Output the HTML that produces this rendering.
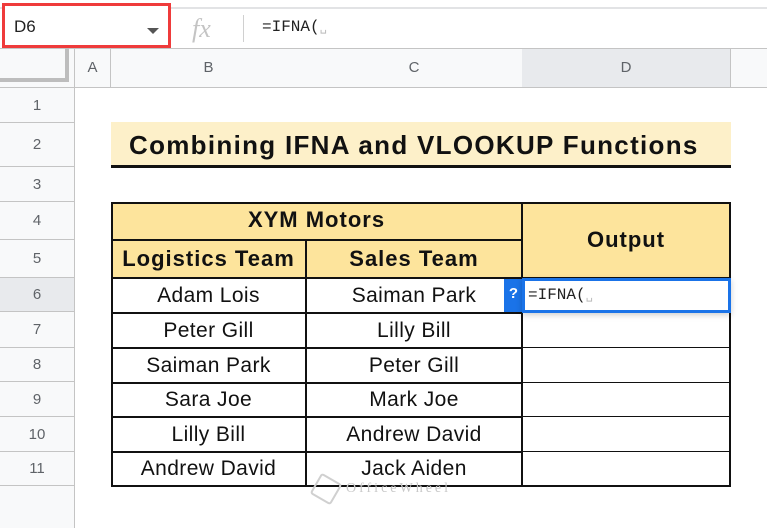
<!DOCTYPE html>
<html><head><style>
*{margin:0;padding:0;box-sizing:border-box}
body{width:767px;height:528px;position:relative;background:#fff;font-family:"Liberation Sans",Arial,sans-serif;overflow:hidden}
.a{position:absolute}
.hd{background:#f8f9fa;color:#5f6368;font-size:15px;text-align:center}
.c{position:absolute;text-align:center;font-size:21px;color:#111;letter-spacing:0.4px;white-space:nowrap}
.b{font-weight:bold;font-size:22px;letter-spacing:1px}
</style></head><body>
<!-- top bar -->
<div class="a" style="left:0;top:7px;width:767px;height:2px;background:#e2e3e5"></div>
<div class="a" style="left:2px;top:3px;width:169px;height:45px;border:3px solid #ef3b3b;background:#fff"></div>
<div class="a" style="left:14px;top:17px;font-size:17px;color:#222">D6</div>
<div class="a" style="left:147px;top:28px;width:0;height:0;border-left:6px solid transparent;border-right:6px solid transparent;border-top:6px solid #555"></div>
<div class="a" style="left:192px;top:14px;font-size:26px;color:#c4c4c4;font-style:italic;font-family:'Liberation Serif',serif">fx</div>
<div class="a" style="left:243px;top:15px;width:1px;height:27px;background:#d0d0d0"></div>
<div class="a" style="left:262px;top:18px;font-size:16px;color:#222;font-family:'Liberation Mono',monospace">=IFNA(<span style="color:#bbb;font-size:12px">␣</span></div>
<!-- column headers -->
<div class="a hd" style="left:0;top:48px;width:767px;height:40px;border-top:1px solid #c4c4c4;border-bottom:1px solid #c4c4c4"></div>
<div class="a" style="left:0;top:48px;width:69px;height:34px;border-right:4px solid #bdbdbd;border-bottom:4px solid #bdbdbd"></div>
<div class="a hd" style="left:74px;top:49px;width:37px;height:38px;line-height:38px;border-left:1px solid #c4c4c4;border-right:1px solid #c4c4c4">A</div>
<div class="a hd" style="left:111px;top:49px;width:196px;height:38px;line-height:38px;border-right:1px solid #c4c4c4">B</div>
<div class="a hd" style="left:306px;top:49px;width:217px;height:38px;line-height:38px;border-right:1px solid #c4c4c4">C</div>
<div class="a hd" style="left:522px;top:49px;width:209px;height:38px;line-height:38px;border-right:1px solid #c4c4c4;background:#e8eaed">D</div>
<!-- row headers -->
<div class="a" style="left:0;top:88px;width:75px;height:440px;background:#f8f9fa;border-right:1px solid #c4c4c4"></div>
<div class="a" style="left:74px;top:88px;width:1px;height:440px;background:#c4c4c4"></div>
<div class="a hd" style="left:0;top:88px;width:74px;height:35px;line-height:35px;border-bottom:1px solid #c4c4c4">1</div>
<div class="a hd" style="left:0;top:123px;width:74px;height:44px;line-height:44px;border-bottom:1px solid #c4c4c4">2</div>
<div class="a hd" style="left:0;top:167px;width:74px;height:35px;line-height:35px;border-bottom:1px solid #c4c4c4">3</div>
<div class="a hd" style="left:0;top:202px;width:74px;height:38px;line-height:38px;border-bottom:1px solid #c4c4c4">4</div>
<div class="a hd" style="left:0;top:240px;width:74px;height:38px;line-height:38px;border-bottom:1px solid #c4c4c4">5</div>
<div class="a hd" style="left:0;top:278px;width:74px;height:34px;line-height:34px;border-bottom:1px solid #c4c4c4;background:#e8eaed">6</div>
<div class="a hd" style="left:0;top:312px;width:74px;height:36px;line-height:36px;border-bottom:1px solid #c4c4c4">7</div>
<div class="a hd" style="left:0;top:348px;width:74px;height:34px;line-height:34px;border-bottom:1px solid #c4c4c4">8</div>
<div class="a hd" style="left:0;top:382px;width:74px;height:35px;line-height:35px;border-bottom:1px solid #c4c4c4">9</div>
<div class="a hd" style="left:0;top:417px;width:74px;height:35px;line-height:35px;border-bottom:1px solid #c4c4c4">10</div>
<div class="a hd" style="left:0;top:452px;width:74px;height:34px;line-height:34px;border-bottom:1px solid #c4c4c4">11</div>
<!-- title -->
<div class="a" style="left:111px;top:122px;width:620px;height:46px;background:#fdf0c9;border-bottom:3px solid #111"></div>
<div class="a" style="left:129px;top:130px;font-size:26px;font-weight:bold;color:#111;white-space:nowrap;letter-spacing:1.3px">Combining IFNA and VLOOKUP Functions</div>
<!-- table header -->
<div class="a" style="left:111px;top:202px;width:620px;height:76px;background:#fde49c"></div>
<div class="a" style="left:111px;top:202px;width:620px;height:285px;border:2px solid #111"></div>
<div class="a" style="left:521px;top:202px;width:2px;height:285px;background:#111"></div>
<div class="a" style="left:305px;top:239px;width:2px;height:248px;background:#111"></div>
<div class="a" style="left:111px;top:239px;width:411px;height:2px;background:#111"></div>
<div class="a" style="left:111px;top:277px;width:620px;height:2px;background:#111"></div>
<div class="a" style="left:111px;top:312px;width:411px;height:2px;background:#111"></div>
<div class="a" style="left:111px;top:347px;width:411px;height:2px;background:#111"></div>
<div class="a" style="left:111px;top:382px;width:411px;height:2px;background:#111"></div>
<div class="a" style="left:111px;top:416px;width:411px;height:2px;background:#111"></div>
<div class="a" style="left:111px;top:451px;width:411px;height:2px;background:#111"></div>
<div class="a" style="left:522px;top:347px;width:208px;height:1px;background:#111"></div>
<div class="a" style="left:522px;top:382px;width:208px;height:1px;background:#111"></div>
<div class="a" style="left:522px;top:416px;width:208px;height:1px;background:#111"></div>
<div class="a" style="left:522px;top:451px;width:208px;height:1px;background:#111"></div>
<div class="c b" style="left:111px;top:207px;width:411px">XYM Motors</div>
<div class="c b" style="left:522px;top:227px;width:208px">Output</div>
<div class="c b" style="left:111px;top:246px;width:195px">Logistics Team</div>
<div class="c b" style="left:306px;top:246px;width:216px">Sales Team</div>
<div class="c" style="left:111px;top:284px;width:195px">Adam Lois</div>
<div class="c" style="left:306px;top:284px;width:216px">Saiman Park</div>
<div class="c" style="left:111px;top:319px;width:195px">Peter Gill</div>
<div class="c" style="left:306px;top:319px;width:216px">Lilly Bill</div>
<div class="c" style="left:111px;top:354px;width:195px">Saiman Park</div>
<div class="c" style="left:306px;top:354px;width:216px">Peter Gill</div>
<div class="c" style="left:111px;top:388px;width:195px">Sara Joe</div>
<div class="c" style="left:306px;top:388px;width:216px">Mark Joe</div>
<div class="c" style="left:111px;top:423px;width:195px">Lilly Bill</div>
<div class="c" style="left:306px;top:423px;width:216px">Andrew David</div>
<div class="c" style="left:111px;top:457px;width:195px">Andrew David</div>
<div class="c" style="left:306px;top:457px;width:216px">Jack Aiden</div>
<!-- active cell -->
<div class="a" style="left:504px;top:279px;width:19px;height:33px;background:#1a73e8;color:#fff;font-weight:bold;font-size:15px;text-align:center;line-height:30px">?</div>
<div class="a" style="left:522px;top:278px;width:209px;height:35px;border:3px solid #1a73e8;background:#fff;box-shadow:0 2px 6px rgba(0,0,0,.2)"></div>
<div class="a" style="left:528px;top:286px;font-size:16px;color:#222;font-family:'Liberation Mono',monospace">=IFNA(<span style="color:#bbb;font-size:12px">␣</span></div>
<!-- watermark -->
<div class="a" style="left:346px;top:481px;font-size:14px;color:#c8c8c8;letter-spacing:3px;font-family:'Liberation Serif',serif">OfficeWheel</div>
<div class="a" style="left:314px;top:477px;width:24px;height:24px;border:2px solid #d0d0d0;transform:rotate(30deg);border-radius:3px"></div>
</body></html>
